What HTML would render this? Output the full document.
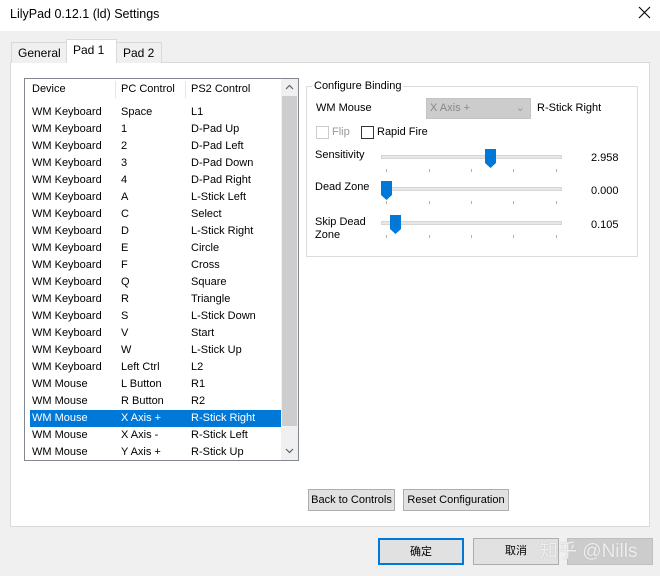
<!DOCTYPE html>
<html><head><meta charset="utf-8"><style>
*{margin:0;padding:0;box-sizing:border-box}
body{width:660px;height:576px;background:#f0f0f0;font-family:"Liberation Sans","Noto Sans CJK SC",sans-serif;font-size:11px;color:#000;position:relative;overflow:hidden}
.abs{position:absolute}
.title{left:0;top:0;width:660px;height:31px;background:#fff}
.title span{position:absolute;left:10px;top:7px;font-size:12.5px}
.x{position:absolute;left:638px;top:6px}
.panel{left:10px;top:62px;width:640px;height:465px;background:#fff;border:1px solid #d9d9d9}
.tab{top:42px;height:21px;border:1px solid #d9d9d9;border-bottom:none;background:#f0f0f0;font-size:12px;padding:3px 6px}
.tab.sel{top:39px;height:24px;background:#fff;z-index:2}
.list{left:24px;top:78px;width:275px;height:383px;border:1px solid #828790;background:#fff;overflow:hidden}
.row{position:absolute;left:0;height:17px;width:256px;line-height:17px}
.row span{position:absolute;top:0}
.c1{left:7px}.c2{left:96px}.c3{left:166px}
.sb{position:absolute;left:256px;top:0;width:17px;height:381px;background:#f0f0f0}
.thumb{position:absolute;left:1px;top:17px;width:15px;height:330px;background:#cdcdcd}
.selrow{background:#0078d7;color:#fff;left:5px;width:251px}
.grp{left:306px;top:86px;width:332px;height:171px;border:1px solid #dcdcdc}
.btn{border:1px solid #adadad;background:#e1e1e1;text-align:center;font-size:11px}
.track{height:4px;background:#e7e7e7;border:1px solid #d6d6d6}
.tick{width:1px;height:3px;background:#b0b0b0}
.thb{width:11px;height:19px}
</style></head><body>
<div class="abs title"><span>LilyPad 0.12.1 (ld) Settings</span>
<svg class="x" width="13" height="13" viewBox="0 0 13 13"><path d="M1 1L12 12M12 1L1 12" stroke="#000" stroke-width="1.1"/></svg></div>
<div class="abs panel"></div>
<div class="abs tab" style="left:11px;width:56px">General</div>
<div class="abs tab sel" style="left:66px;width:51px;padding-top:3px">Pad 1</div>
<div class="abs tab" style="left:116px;width:46px">Pad 2</div>
<div class="abs list">
<div class="row" style="top:2px"><span class="c1">Device</span><span class="c2">PC Control</span><span class="c3">PS2 Control</span></div>
<div style="position:absolute;left:90px;top:2px;width:1px;height:17px;background:#e5e5e5"></div>
<div style="position:absolute;left:160px;top:2px;width:1px;height:17px;background:#e5e5e5"></div>
<div id="rows"></div>
<div class="sb"><div class="thumb"></div>
<svg style="position:absolute;left:4px;top:5px" width="9" height="6"><path d="M1 5L4.5 1.5L8 5" stroke="#606060" fill="none" stroke-width="1.2"/></svg>
<svg style="position:absolute;left:4px;top:369px" width="9" height="6"><path d="M1 1L4.5 4.5L8 1" stroke="#606060" fill="none" stroke-width="1.2"/></svg></div>
</div>
<div class="abs grp"></div>
<div class="abs" style="left:312px;top:80px;background:#fff;padding:0 2px">Configure Binding</div>
<div class="abs" style="left:316px;top:102px">WM Mouse</div>
<div class="abs" style="left:426px;top:98px;width:105px;height:21px;background:#cccccc;border:1px solid #c4c4c4;color:#888;padding:3px 3px">X Axis +<span style="position:absolute;right:5px;top:2px;color:#999">&#8964;</span></div>
<div class="abs" style="left:537px;top:102px">R-Stick Right</div>
<div class="abs" style="left:316px;top:126px;width:13px;height:13px;border:1px solid #ccc"></div>
<div class="abs" style="left:332px;top:126px;color:#999">Flip</div>
<div class="abs" style="left:361px;top:126px;width:13px;height:13px;border:1px solid #333"></div>
<div class="abs" style="left:377px;top:126px">Rapid Fire</div>
<div class="abs" style="left:315px;top:149px">Sensitivity</div>
<div class="abs" style="left:315px;top:181px">Dead Zone</div>
<div class="abs" style="left:315px;top:216px;line-height:13px">Skip Dead<br>Zone</div>
<div class="abs" style="left:591px;top:152px">2.958</div>
<div class="abs" style="left:591px;top:185px">0.000</div>
<div class="abs" style="left:591px;top:219px">0.105</div>
<div id="sliders"></div>
<div class="abs btn" style="left:308px;top:489px;width:87px;height:22px;line-height:20px">Back to Controls</div>
<div class="abs btn" style="left:403px;top:489px;width:106px;height:22px;line-height:20px">Reset Configuration</div>
<div class="abs btn" style="left:378px;top:538px;width:86px;height:27px;line-height:25px;border:2px solid #0078d7">确定</div>
<div class="abs btn" style="left:473px;top:538px;width:86px;height:27px;line-height:25px">取消</div>
<div class="abs btn" style="left:567px;top:538px;width:86px;height:27px;background:#ccc;border-color:#bfbfbf"></div>
<div class="abs" style="left:539px;top:536px;font-size:19px;color:rgba(245,245,245,0.9);text-shadow:0 0 1px #aaa">知乎 @Nills</div>
<script>
var d=[["WM Keyboard","Space","L1"],["WM Keyboard","1","D-Pad Up"],["WM Keyboard","2","D-Pad Left"],["WM Keyboard","3","D-Pad Down"],["WM Keyboard","4","D-Pad Right"],["WM Keyboard","A","L-Stick Left"],["WM Keyboard","C","Select"],["WM Keyboard","D","L-Stick Right"],["WM Keyboard","E","Circle"],["WM Keyboard","F","Cross"],["WM Keyboard","Q","Square"],["WM Keyboard","R","Triangle"],["WM Keyboard","S","L-Stick Down"],["WM Keyboard","V","Start"],["WM Keyboard","W","L-Stick Up"],["WM Keyboard","Left Ctrl","L2"],["WM Mouse","L Button","R1"],["WM Mouse","R Button","R2"],["WM Mouse","X Axis +","R-Stick Right"],["WM Mouse","X Axis -","R-Stick Left"],["WM Mouse","Y Axis +","R-Stick Up"]];
var h="";d.forEach(function(r,i){h+='<div class="row'+(i==18?' selrow':'')+'" style="top:'+(25+i*17)+'px">'+(i==18?'<span style="left:2px">':'<span class="c1">')+r[0]+'</span><span style="left:'+(i==18?91:96)+'px">'+r[1]+'</span><span style="left:'+(i==18?161:166)+'px">'+r[2]+'</span></div>';});
document.getElementById("rows").innerHTML=h;
var s="",ys=[157,189,223],tx=[490,386,395];
ys.forEach(function(y,k){s+='<div class="abs track" style="left:381px;top:'+(y-2)+'px;width:181px"></div>';
[386,429,471,513,556].forEach(function(x){s+='<div class="abs tick" style="left:'+x+'px;top:'+(y+12)+'px"></div>';});
s+='<svg class="abs thb" style="left:'+(tx[k]-5)+'px;top:'+(y-8)+'px" viewBox="0 0 11 19"><path d="M0 0H11V14L5.5 19L0 14Z" fill="#0078d7"/></svg>';});
document.getElementById("sliders").innerHTML=s;
</script>
</body></html>
